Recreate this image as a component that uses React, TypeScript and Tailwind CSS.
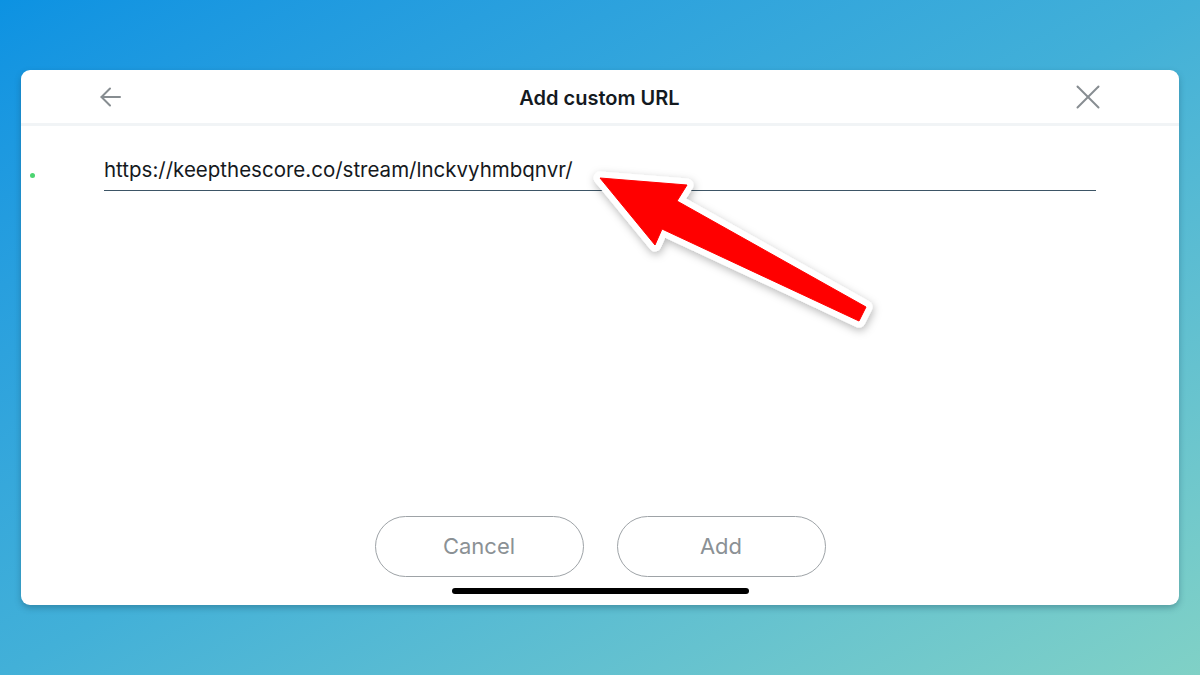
import React from 'react';

// Flecha roja de anotación encima del diálogo
const RedArrow: React.FC = () => (
  <svg
    className="absolute left-0 top-0 pointer-events-none"
    width="1200"
    height="675"
    viewBox="0 0 1200 675"
  >
    <defs>
      <filter id="arrowShadow" x="-20%" y="-20%" width="140%" height="140%">
        <feDropShadow dx="1" dy="3" stdDeviation="4" floodColor="#000" floodOpacity="0.28" />
      </filter>
    </defs>
    <polygon
      points="600,178 687,185 677,201 866,307 859,321 662,229 655,245"
      fill="#ff0000"
      stroke="#ffffff"
      strokeWidth="13"
      strokeLinejoin="round"
      filter="url(#arrowShadow)"
    />
    <polygon
      points="600,178 687,185 677,201 866,307 859,321 662,229 655,245"
      fill="#ff0000"
      stroke="#ff0000"
      strokeWidth="1"
      strokeLinejoin="round"
    />
  </svg>
);

export default function App() {
  return (
    <div
      className="relative h-[675px] w-full overflow-hidden bg-linear-to-br from-[#0c92e2] via-[#42b0d8] to-[#80d1c6] px-[21px] pt-[70px]"
      style={{ fontFamily: 'Inter, "Noto Sans", sans-serif' }}
    >
      <div className="relative flex h-[535px] flex-col rounded-[9px] bg-white shadow-[0_3px_6px_rgba(20,70,90,0.35)]">
        {/* Header */}
        <div className="flex h-[56px] items-center justify-between border-b-[3px] border-[#f1f4f6] pl-[78px] pr-[79px]">
          <svg width="24" height="24" viewBox="0 0 24 24" fill="none" stroke="#878d91" strokeWidth="2" strokeLinecap="round" strokeLinejoin="round">
            <path d="M21 12H2.5" />
            <path d="M11 3.5L2.5 12l8.5 8.5" />
          </svg>
          <h1 className="mt-[2px] text-[20px] font-semibold text-[#141a1f]">Add custom URL</h1>
          <svg width="24" height="24" viewBox="0 0 24 24" fill="none" stroke="#878d91" strokeWidth="2" strokeLinecap="round">
            <path d="M1.5 1.5l21 21" />
            <path d="M22.5 1.5l-21 21" />
          </svg>
        </div>

        {/* Campo de URL */}
        <div className="relative mt-[30px] px-[83px]">
          <span className="absolute left-[9px] top-[17px] h-[5px] w-[5px] rounded-full bg-[#4cd471]" />
          <div className="border-b-[1.5px] border-[#3d5566] pb-[6px] text-[20.5px] leading-[28px] text-[#15191d]">
            https://keepthescore.co/stream/lnckvyhmbqnvr/
          </div>
        </div>

        <div className="flex-1" />

        {/* Botones */}
        <div className="flex justify-center gap-[33px]">
          <button className="h-[61px] w-[209px] rounded-full border border-[#9ea3a7] text-[22px] text-[#8b9195]">
            Cancel
          </button>
          <button className="h-[61px] w-[209px] rounded-full border border-[#9ea3a7] text-[22px] text-[#8b9195]">
            Add
          </button>
        </div>

        {/* Indicador de inicio */}
        <div className="mb-[11px] mt-[11px] flex justify-center">
          <div className="h-[6px] w-[297px] rounded-full bg-black" />
        </div>
      </div>

      <RedArrow />
    </div>
  );
}
